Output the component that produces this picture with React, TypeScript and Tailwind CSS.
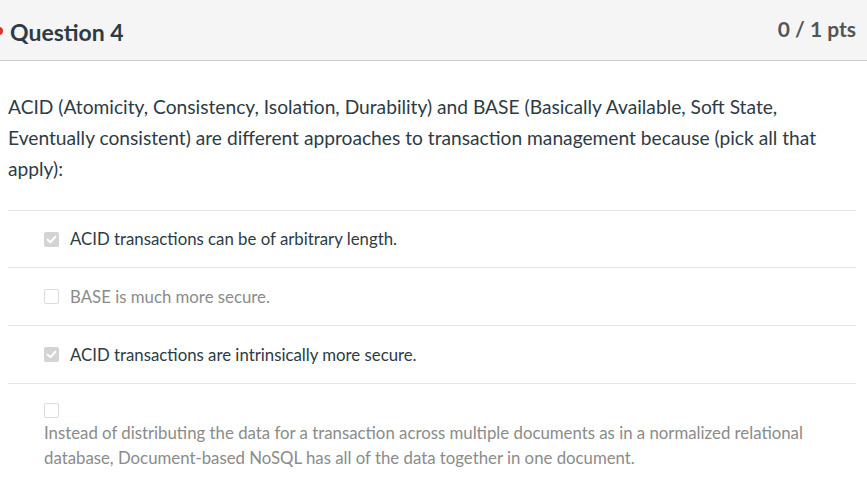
import React from "react";

const Check = ({ checked }: { checked: boolean }) =>
  checked ? (
    <span className="flex h-[15px] w-[15px] shrink-0 items-center justify-center rounded-[2px] bg-[#d4d4d4]">
      <svg width="11" height="11" viewBox="0 0 10 10">
        <path d="M1.5 5.2 L4 7.5 L8.5 2.5" fill="none" stroke="#fff" strokeWidth="1.8" strokeLinecap="round" strokeLinejoin="round" />
      </svg>
    </span>
  ) : (
    <span className="block h-[15px] w-[15px] shrink-0 rounded-[2px] border border-[#dcdcdc] bg-white" />
  );

export default function App() {
  return (
    <div className="min-h-[480px] w-[867px] bg-white font-['Lato',sans-serif] text-[#2d3b45]">
      <div className="relative flex h-[61px] items-center justify-between border-b border-[#c7cdd1] bg-[#f5f5f5] pl-[10px] pr-[11px]">
        <span className="absolute left-[-5px] top-[27px] h-[8px] w-[8px] rounded-full bg-[#d9352b]" />
        <h2 className="pt-[4px] text-[23px] font-bold leading-none">Question 4</h2>
        <span className="pb-[4px] text-[21px] font-bold leading-none text-[#555]">0 / 1 pts</span>
      </div>
      <div className="pl-[8px] pr-[11px]">
        <p className="pt-[30px] text-[19.2px] leading-[31px]">
          ACID (Atomicity, Consistency, Isolation, Durability) and BASE (Basically Available, Soft State, Eventually consistent) are different approaches to transaction management because (pick all that apply):
        </p>
        <div className="mt-[26px] border-t border-[#e6e6e6]">
          <div className="flex h-[57px] items-center gap-[11px] border-b border-[#e6e6e6] pl-[36px] text-[16.8px]">
            <Check checked />
            <span>ACID transactions can be of arbitrary length.</span>
          </div>
          <div className="flex h-[58px] items-center gap-[11px] border-b border-[#e6e6e6] pl-[36px] text-[16.8px] text-[#8b8b8b]">
            <Check checked={false} />
            <span>BASE is much more secure.</span>
          </div>
          <div className="flex h-[58px] items-center gap-[11px] border-b border-[#e6e6e6] pl-[36px] text-[16.8px]">
            <Check checked />
            <span>ACID transactions are intrinsically more secure.</span>
          </div>
          <div className="pl-[36px] pt-[19px] text-[16.8px] leading-[25px] text-[#8b8b8b]">
            <Check checked={false} />
            <p className="mt-[2px] pr-[40px]">
              Instead of distributing the data for a transaction across multiple documents as in a normalized relational database, Document-based NoSQL has all of the data together in one document.
            </p>
          </div>
        </div>
      </div>
    </div>
  );
}
